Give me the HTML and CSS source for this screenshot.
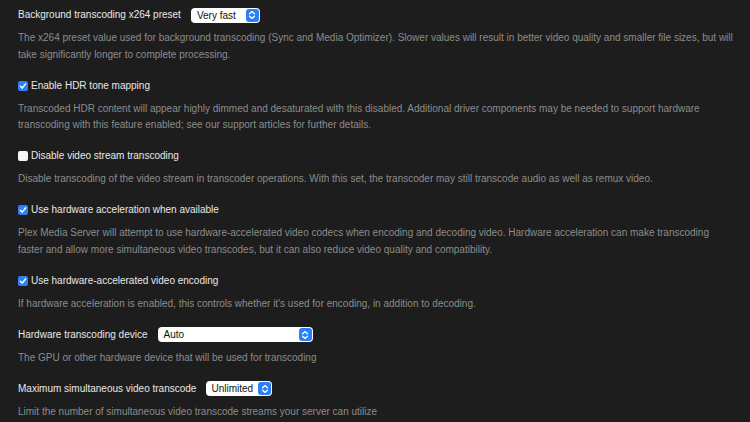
FILE: index.html
```html
<!DOCTYPE html>
<html>
<head>
<meta charset="utf-8">
<link rel="stylesheet" href="styles.css">
</head>
<body>
<div class="settings">
  <div class="setting">
    <div class="row">
      <span class="label">Background transcoding x264 preset</span>
      <div class="select w-fast"><span class="val">Very fast</span><span class="stepper"><svg viewBox="0 0 12 12" width="12" height="12"><path d="M3.6 4.8 L6 2.6 L8.4 4.8 M3.6 7.2 L6 9.4 L8.4 7.2" fill="none" stroke="#fff" stroke-width="1.3" stroke-linecap="round" stroke-linejoin="round"/></svg></span></div>
    </div>
    <p class="desc">The x264 preset value used for background transcoding (Sync and Media Optimizer). Slower values will result in better video quality and smaller file sizes, but will take significantly longer to complete processing.</p>
  </div>

  <div class="setting">
    <div class="row">
      <span class="check on"><svg viewBox="0 0 10 10" width="10" height="10"><path d="M2.4 5.2 L4.2 7.1 L7.7 2.8" fill="none" stroke="#fff" stroke-width="1.5" stroke-linecap="round" stroke-linejoin="round"/></svg></span>
      <span class="label">Enable HDR tone mapping</span>
    </div>
    <p class="desc">Transcoded HDR content will appear highly dimmed and desaturated with this disabled. Additional driver components may be needed to support hardware transcoding with this feature enabled; see our support articles for further details.</p>
  </div>

  <div class="setting">
    <div class="row">
      <span class="check"></span>
      <span class="label">Disable video stream transcoding</span>
    </div>
    <p class="desc">Disable transcoding of the video stream in transcoder operations. With this set, the transcoder may still transcode audio as well as remux video.</p>
  </div>

  <div class="setting">
    <div class="row">
      <span class="check on"><svg viewBox="0 0 10 10" width="10" height="10"><path d="M2.4 5.2 L4.2 7.1 L7.7 2.8" fill="none" stroke="#fff" stroke-width="1.5" stroke-linecap="round" stroke-linejoin="round"/></svg></span>
      <span class="label">Use hardware acceleration when available</span>
    </div>
    <p class="desc">Plex Media Server will attempt to use hardware-accelerated video codecs when encoding and decoding video. Hardware acceleration can make transcoding faster and allow more simultaneous video transcodes, but it can also reduce video quality and compatibility.</p>
  </div>

  <div class="setting">
    <div class="row">
      <span class="check on"><svg viewBox="0 0 10 10" width="10" height="10"><path d="M2.4 5.2 L4.2 7.1 L7.7 2.8" fill="none" stroke="#fff" stroke-width="1.5" stroke-linecap="round" stroke-linejoin="round"/></svg></span>
      <span class="label">Use hardware-accelerated video encoding</span>
    </div>
    <p class="desc">If hardware acceleration is enabled, this controls whether it's used for encoding, in addition to decoding.</p>
  </div>

  <div class="setting">
    <div class="row">
      <span class="label">Hardware transcoding device</span>
      <div class="select w-auto"><span class="val">Auto</span><span class="stepper"><svg viewBox="0 0 12 12" width="12" height="12"><path d="M3.6 4.8 L6 2.6 L8.4 4.8 M3.6 7.2 L6 9.4 L8.4 7.2" fill="none" stroke="#fff" stroke-width="1.3" stroke-linecap="round" stroke-linejoin="round"/></svg></span></div>
    </div>
    <p class="desc">The GPU or other hardware device that will be used for transcoding</p>
  </div>

  <div class="setting">
    <div class="row">
      <span class="label">Maximum simultaneous video transcode</span>
      <div class="select w-unl"><span class="val">Unlimited</span><span class="stepper"><svg viewBox="0 0 12 12" width="12" height="12"><path d="M3.6 4.8 L6 2.6 L8.4 4.8 M3.6 7.2 L6 9.4 L8.4 7.2" fill="none" stroke="#fff" stroke-width="1.3" stroke-linecap="round" stroke-linejoin="round"/></svg></span></div>
    </div>
    <p class="desc">Limit the number of simultaneous video transcode streams your server can utilize</p>
  </div>
</div>
</body>
</html>
```
FILE: styles.css
```css
html, body {
  margin: 0;
  padding: 0;
  background: #1d1d1d;
}
body {
  font-family: "Liberation Sans", Arial, sans-serif;
  width: 750px;
  height: 422px;
  overflow: hidden;
}
.settings {
  padding: 7px 16px 0 18px;
}
.setting {
  margin-bottom: 14.5px;
}
.row {
  display: flex;
  align-items: center;
  height: 16px;
}
.label {
  color: #e8e8e8;
  font-size: 10px;
  line-height: 16px;
}
.desc {
  margin: 7px 0 0 0;
  color: #8c8c8c;
  font-size: 10px;
  line-height: 16.5px;
}
.check {
  width: 10px;
  height: 10px;
  border-radius: 2px;
  background: #f4f4f4;
  margin-right: 3px;
  display: flex;
  align-items: center;
  justify-content: center;
}
.check.on {
  background: #2d7ff7;
}
.select {
  margin-left: 10px;
  height: 15px;
  background: #fff;
  border-radius: 4px;
  display: flex;
  align-items: center;
  justify-content: space-between;
  padding: 0 1px 0 6px;
  box-sizing: border-box;
  gap: 3px;
}
.select .val {
  color: #111;
  font-size: 10px;
  line-height: 15px;
}
.stepper {
  width: 13px;
  height: 13px;
  background: #2d7ff7;
  border-radius: 3px;
  display: flex;
  align-items: center;
  justify-content: center;
  flex: none;
}
.w-fast { width: 69px; }
.w-auto { width: 155px; }
.w-unl { width: 66px; padding-left: 5px; }
```
